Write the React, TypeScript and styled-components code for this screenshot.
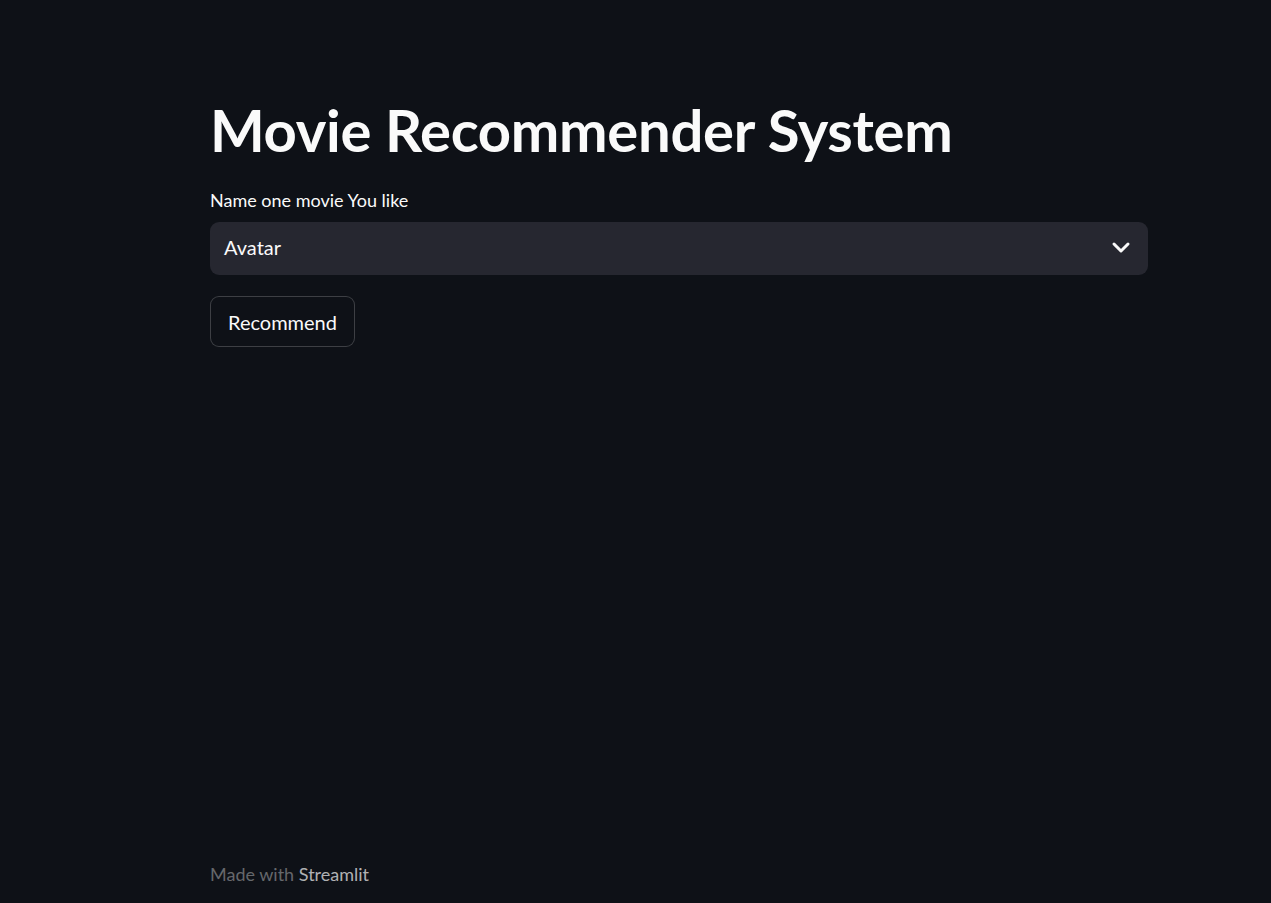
import React from 'react';
import styled, { createGlobalStyle } from 'styled-components';

const GlobalStyle = createGlobalStyle`
  html, body {
    margin: 0;
    padding: 0;
    background: #0e1117;
  }
  body {
    font-family: Lato, "Noto Sans", sans-serif;
    color: #fafafa;
  }
`;

const Page = styled.div`
  display: flex;
  flex-direction: column;
  min-height: 100vh;
  box-sizing: border-box;
  padding: 0 123px 0 210px;
`;

const Main = styled.main`
  flex: 1;
  display: flex;
  flex-direction: column;
  padding-top: 94px;
`;

const Title = styled.h1`
  margin: 0;
  font-size: 58px;
  font-weight: 700;
  line-height: 72px;
  letter-spacing: -0.3px;
`;

const Label = styled.label`
  display: block;
  margin-top: 22px;
  font-size: 18px;
  line-height: 24px;
`;

const Select = styled.div`
  display: flex;
  align-items: center;
  justify-content: space-between;
  box-sizing: border-box;
  margin-top: 10px;
  height: 53px;
  padding: 0 15px 4px 14px;
  background: #262730;
  border-radius: 9px;
  font-size: 20px;
`;

const Button = styled.button`
  align-self: flex-start;
  margin-top: 21px;
  height: 51px;
  padding: 0 17px;
  background: #0e1117;
  color: #fafafa;
  border: 1px solid rgba(250, 250, 250, 0.2);
  border-radius: 9px;
  font-family: inherit;
  font-size: 20px;
`;

const Footer = styled.footer`
  padding-bottom: 17px;
  font-size: 18px;
  line-height: 24px;
  color: rgba(250, 250, 250, 0.38);
`;

const Brand = styled.span`
  color: rgba(250, 250, 250, 0.7);
`;

const Chevron = () => (
  <svg width="24" height="24" viewBox="0 0 24 24" fill="none" stroke="#fafafa" strokeWidth="3" strokeLinecap="round" strokeLinejoin="round">
    <polyline points="5 9 12 16 19 9" />
  </svg>
);

export default function App() {
  return (
    <>
      <GlobalStyle />
      <Page>
        <Main>
          <Title>Movie Recommender System</Title>
          <Label>Name one movie You like</Label>
          <Select>
            <span>Avatar</span>
            <Chevron />
          </Select>
          <Button>Recommend</Button>
        </Main>
        <Footer>
          Made with <Brand>Streamlit</Brand>
        </Footer>
      </Page>
    </>
  );
}
